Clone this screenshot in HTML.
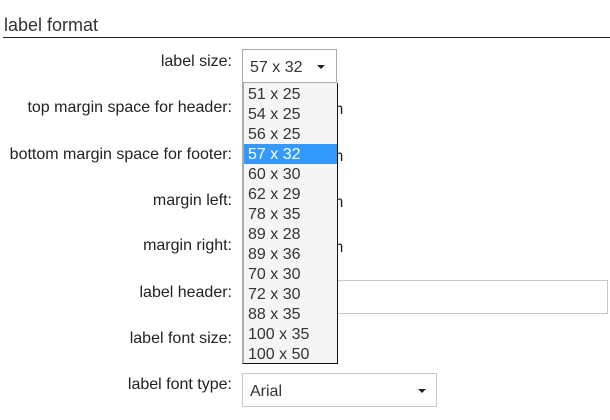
<!DOCTYPE html>
<html><head><style>
body{margin:0;width:610px;height:420px;background:#fff;font-family:"Liberation Sans",Arial,sans-serif;position:relative;overflow:hidden;color:#222}
.a{position:absolute}
.h{left:4px;top:15px;font-size:18px;color:#333}
.line{left:3px;top:37px;width:607px;height:1px;background:#222}
.l{right:378px;font-size:16px;white-space:nowrap;text-align:right}
.box{border:1px solid #c8c8c8;background:#fff;box-sizing:border-box}
.sel{font-size:16px;color:#333}
.caret{position:absolute;width:0;height:0;border-left:4px solid transparent;border-right:4px solid transparent;border-top:4px solid #222}
.dd{left:242px;top:83px;width:96px;height:281px;background:#f5f5f5;border-left:2px solid #aaa;border-right:1px solid #111;border-bottom:1px solid #111;box-sizing:border-box;padding-top:1px;z-index:2}
.it{height:20px;line-height:21px;font-size:16px;color:#333;padding-left:4px}
.hi{background:#3399ff;color:#fff}
.m{font-size:16px;left:330px;z-index:1}
</style></head><body>
<div class="a h">label format</div>
<div class="a line"></div>
<div class="a l" style="top:53px">label size:</div>
<div class="a l" style="top:99px">top margin space for header:</div>
<div class="a l" style="top:146px">bottom margin space for footer:</div>
<div class="a l" style="top:192px">margin left:</div>
<div class="a l" style="top:237px">margin right:</div>
<div class="a l" style="top:284px">label header:</div>
<div class="a l" style="top:330px">label font size:</div>
<div class="a l" style="top:376px">label font type:</div>
<div class="a m" style="top:101px">m</div>
<div class="a m" style="top:148px">m</div>
<div class="a m" style="top:194px">m</div>
<div class="a m" style="top:239px">m</div>
<div class="a box" style="left:242px;top:49px;width:95px;height:34px;border-color:#aaa"><span class="a sel" style="left:7px;top:9px">57 x 32</span><span class="caret" style="left:74px;top:15px"></span></div>
<div class="a box" style="left:242px;top:280px;width:366px;height:34px"></div>
<div class="a box" style="left:242px;top:373px;width:195px;height:34px"><span class="a sel" style="left:7px;top:9px">Arial</span><span class="caret" style="left:175px;top:15px"></span></div>
<div class="a dd">
<div class="it">51 x 25</div><div class="it">54 x 25</div><div class="it">56 x 25</div><div class="it hi">57 x 32</div><div class="it">60 x 30</div><div class="it">62 x 29</div><div class="it">78 x 35</div><div class="it">89 x 28</div><div class="it">89 x 36</div><div class="it">70 x 30</div><div class="it">72 x 30</div><div class="it">88 x 35</div><div class="it">100 x 35</div><div class="it">100 x 50</div>
</div>
</body></html>
